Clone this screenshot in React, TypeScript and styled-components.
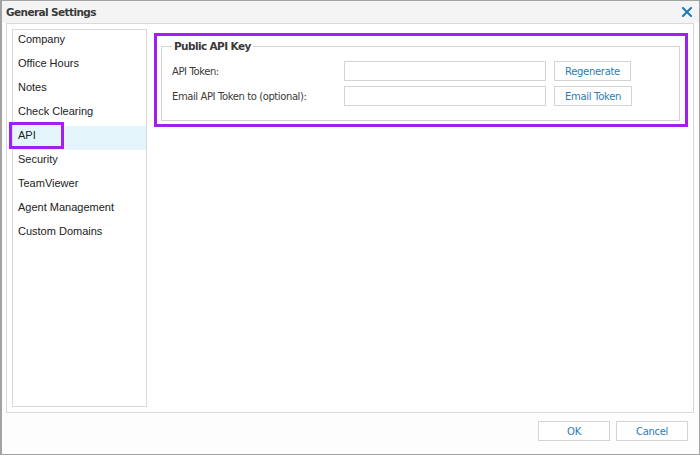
import React from 'react'
import styled, { createGlobalStyle } from 'styled-components'

const GlobalStyle = createGlobalStyle`
  html, body {
    margin: 0;
    padding: 0;
    background: #ffffff;
  }
  * {
    box-sizing: border-box;
  }
`

const sections = [
  'Company',
  'Office Hours',
  'Notes',
  'Check Clearing',
  'API',
  'Security',
  'TeamViewer',
  'Agent Management',
  'Custom Domains',
]

const App = () => {
  return (
    <>
      <GlobalStyle />
      <S.Window>
        <S.TitleBar>
          <S.Title>General Settings</S.Title>
          <S.Close aria-label="Close">
            <svg width="10" height="10" viewBox="0 0 10 10">
              <path d="M1 1 L9 9 M9 1 L1 9" stroke="#1f78b4" strokeWidth="2" strokeLinecap="square" />
            </svg>
          </S.Close>
        </S.TitleBar>

        <S.Body>
          <S.Sidebar>
            {sections.map((name) => (
              <S.NavItem key={name} $active={name === 'API'}>
                {name}
                {name === 'API' && <S.Marker />}
              </S.NavItem>
            ))}
          </S.Sidebar>

          <S.Content>
            <S.Highlight>
              <S.Fieldset>
                <S.Legend>Public API Key</S.Legend>
                <S.Grid>
                  <S.Label>API Token:</S.Label>
                  <S.Input />
                  <S.Button>Regenerate</S.Button>
                  <S.Label>Email API Token to (optional):</S.Label>
                  <S.Input />
                  <S.Button>Email Token</S.Button>
                </S.Grid>
              </S.Fieldset>
            </S.Highlight>
          </S.Content>
        </S.Body>

        <S.Footer>
          <S.Button $wide>OK</S.Button>
          <S.Button $wide>Cancel</S.Button>
        </S.Footer>
      </S.Window>
    </>
  )
}

export default App

const S = {
  Window: styled.div`
    width: 700px;
    height: 455px;
    border: 1px solid #a3a3a3;
    border-left-width: 2px;
    background: #fdfdfd;
    display: flex;
    flex-direction: column;
    font-family: Tahoma, "DejaVu Sans", sans-serif;
  `,
  TitleBar: styled.div`
    height: 22px;
    padding: 0 7px 0 4px;
    display: flex;
    align-items: center;
    justify-content: space-between;
    background: #f4f4f4;
  `,
  Title: styled.div`
    font-family: "DejaVu Sans", sans-serif;
    font-weight: bold;
    font-size: 10.5px;
    letter-spacing: -0.6px;
    color: #3a3a3a;
  `,
  Close: styled.div`
    width: 10px;
    height: 10px;
    display: flex;
  `,
  Body: styled.div`
    flex: 1;
    margin: 0 5px 0 4px;
    border: 1px solid #d9d9d9;
    padding: 5px;
    display: flex;
    background: #ffffff;
  `,
  Sidebar: styled.div`
    width: 135px;
    border: 1px solid #d9d9d9;
    display: flex;
    flex-direction: column;
  `,
  NavItem: styled.div<{ $active?: boolean }>`
    position: relative;
    height: 24px;
    padding: 0 5px;
    line-height: 18px;
    font-family: "Liberation Sans", Arial, sans-serif;
    font-size: 11px;
    color: #222222;
    background: ${(p) => (p.$active ? '#e3f5fa' : 'transparent')};
  `,
  Marker: styled.div`
    position: absolute;
    left: -4px;
    top: -4px;
    width: 55px;
    height: 27px;
    border: 3px solid #a21ff2;
  `,
  Content: styled.div`
    flex: 1;
    padding: 4px 0 0 7px;
  `,
  Highlight: styled.div`
    border: 3px solid #a21ff2;
    padding: 4px 5px 3px 4px;
  `,
  Fieldset: styled.fieldset`
    margin: 0;
    border: 1px solid #d4d4d4;
    padding: 9px 10px 14px 10px;
  `,
  Legend: styled.legend`
    margin-left: 0;
    padding: 0 2px;
    font-family: "DejaVu Sans", sans-serif;
    font-weight: bold;
    font-size: 10.5px;
    letter-spacing: -0.6px;
    color: #3a3a3a;
  `,
  Grid: styled.div`
    display: grid;
    grid-template-columns: 164px 202px auto;
    column-gap: 8px;
    row-gap: 5px;
    align-items: center;
    justify-items: start;
  `,
  Label: styled.div`
    font-family: "DejaVu Sans", sans-serif;
    font-size: 10px;
    letter-spacing: -0.4px;
    color: #3a3a3a;
  `,
  Input: styled.input`
    width: 202px;
    height: 20px;
    border: 1px solid #d4d4d4;
    padding: 0 4px;
    font-size: 11px;
    outline: none;
    background: #ffffff;
  `,
  Button: styled.button<{ $wide?: boolean }>`
    height: 20px;
    ${(p) => (p.$wide ? 'width: 72px;' : 'padding: 0 10px;')}
    border: 1px solid #d4d4d4;
    background: #ffffff;
    font-family: "DejaVu Sans", sans-serif;
    font-size: 10px;
    letter-spacing: -0.3px;
    color: #2a7cb6;
    cursor: pointer;
  `,
  Footer: styled.div`
    height: 41px;
    padding: 8px 11px 0 0;
    display: flex;
    justify-content: flex-end;
    align-items: flex-start;
    gap: 6px;
  `,
}
